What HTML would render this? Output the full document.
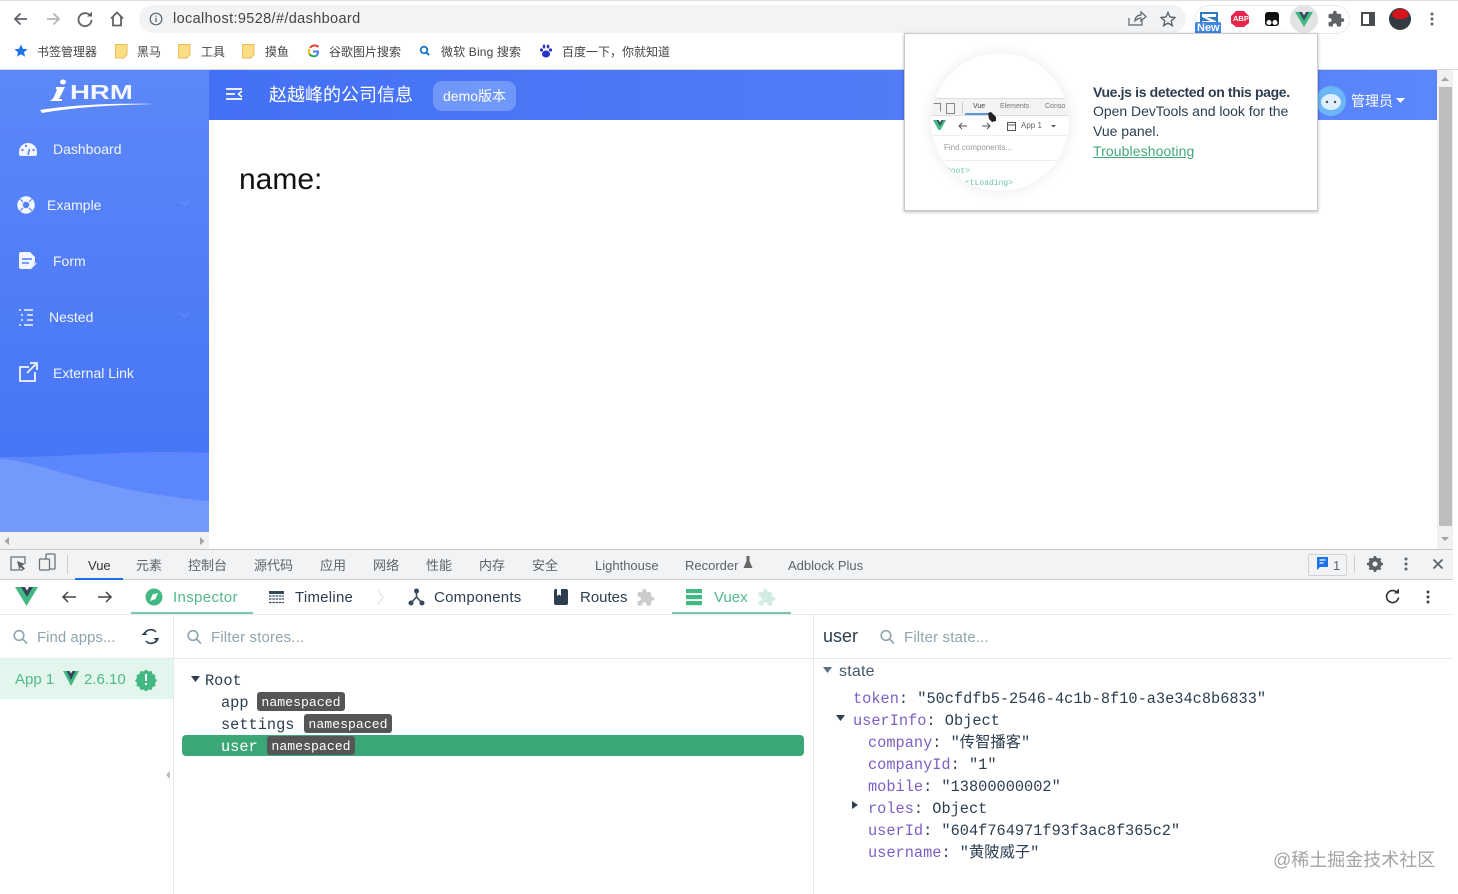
<!DOCTYPE html>
<html><head><meta charset="utf-8"><style>
html,body{margin:0;padding:0;width:1458px;height:894px;overflow:hidden;background:#fff}
body{position:relative;font-family:"Liberation Sans","Noto Sans CJK SC",sans-serif}
.t{position:absolute;white-space:nowrap;line-height:20px;height:20px}
.b{position:absolute}
.m{font-family:"Liberation Mono","Noto Sans CJK SC",monospace;font-size:15.3px;color:#2c3e50}
.k{color:#7d5fc4}
.bm{font-size:12px;color:#444}
.mn{font-size:14px;color:#f2f6ff}
.dt{font-size:13px;color:#5f6368}
.vt{font-size:15px;color:#2c3e50;letter-spacing:.25px}
.ph{font-size:15px;color:#8fa5b0;letter-spacing:-.1px}
.bd{position:absolute;background:#555;color:#fff;border-radius:3px;font-family:"Liberation Mono",monospace;font-size:13.2px;line-height:21px;height:19px;text-align:center;width:88px}
svg.i{position:absolute;overflow:visible}
</style></head><body>

<!-- browser chrome -->
<div class="b" style="left:0;top:0;width:1458px;height:1px;background:#dedfe1"></div>
<div class="b" style="left:139px;top:5px;width:1047px;height:28px;background:#f1f3f4;border-radius:14px"></div>
<div class="b" style="left:1195px;top:5px;width:153px;height:27px;border:1px solid #e8e9eb;border-radius:14px"></div>
<div class="t" style="left:173px;top:9px;font-size:14.5px;color:#444;letter-spacing:.36px">localhost:9528/#/dashboard</div>

<svg class="i" style="left:0;top:0" width="1458" height="70" fill="none">
 <path d="M27 19H15M20.500 13.500L15 19l5.500 5.500" stroke="#5f6368" stroke-width="1.800"/>
 <path d="M47 19h12M53.500 13.500L59 19l-5.500 5.500" stroke="#b3b6ba" stroke-width="1.800"/>
 <path d="M90 15.500A6.500 6.500 0 1 0 91.500 20" stroke="#5f6368" stroke-width="1.800"/>
 <path d="M87 16.500h5v-5z" fill="#5f6368"/>
 <path d="M111 18.500l6-6 6 6M113 17v8.500h8V17" stroke="#5f6368" stroke-width="1.800"/>
 <circle cx="156" cy="19" r="5.800" stroke="#5f6368" stroke-width="1.200"/>
 <path d="M156 18v4M156 15.500v1.200" stroke="#5f6368" stroke-width="1.300"/>
 <path d="M1129 18v7h13v-4M1135 21c0-4 3-6 6-6v-3l5 4.500-5 4.500v-3c-2 0-4 1-6 3z" stroke="#5f6368" stroke-width="1.200"/>
 <path d="M1168 12.500l2 4.500 4.900.5-3.700 3.300 1.100 4.800-4.300-2.500-4.300 2.500 1.100-4.800-3.700-3.300 4.900-.5z" stroke="#5f6368" stroke-width="1.400"/>
 <!-- New ext -->
 <rect x="1200" y="12" width="18" height="12" fill="#2f78c4"/>
 <path d="M1202 14h14v3h-9l9 4v2h-14v-2h8l-8-4z" fill="#fff"/>
 <rect x="1195" y="22" width="26" height="12" rx="2" fill="#3f86e0"/>
 <!-- ABP -->
 <path d="M1236 11h8l5 5v7l-5 4h-8l-5-4v-7z" fill="#e8254a"/>
 <!-- tamper -->
 <rect x="1265" y="12" width="14" height="14" rx="3" fill="#111"/>
 <circle cx="1269" cy="22.500" r="2.500" fill="#fff"/><circle cx="1275" cy="22.500" r="2.500" fill="#fff"/>
 <!-- vue active -->
 <circle cx="1304" cy="19" r="14" fill="#e2e3e5"/>
 <path d="M1295 12h5l4 7 4-7h5l-9 15z" fill="#42b883"/>
 <path d="M1299 12h3l2 3.500 2-3.500h3l-5 8.500z" fill="#35495e"/>
 <!-- puzzle -->
 <path transform="translate(1327 10) scale(.75)" d="M20.500 11H19V7c0-1.100-.9-2-2-2h-4V3.500C13 2.120 11.880 1 10.500 1S8 2.120 8 3.500V5H4c-1.100 0-1.990.9-1.990 2v3.800H3.500c1.490 0 2.700 1.210 2.700 2.700s-1.210 2.700-2.700 2.700H2V20c0 1.100.9 2 2 2h3.800v-1.500c0-1.490 1.210-2.700 2.700-2.700 1.490 0 2.700 1.210 2.700 2.700V22H17c1.100 0 2-.9 2-2v-4h1.500c1.380 0 2.500-1.120 2.500-2.500S21.880 11 20.500 11z" fill="#5f6368"/>
 <!-- panel -->
 <rect x="1362" y="13" width="12" height="12" stroke="#4a4d50" stroke-width="2"/>
 <rect x="1369" y="13" width="5" height="12" fill="#4a4d50"/>
 <!-- avatar -->
 <circle cx="1400" cy="19" r="11" fill="#333a42"/>
 <path d="M1392 15c1-4 5-6 9-6s7 2 8 6c-1 3-5 4-9 4s-7-1-8-4z" fill="#d8131c"/>
 <circle cx="1432" cy="14" r="1.500" fill="#5f6368"/><circle cx="1432" cy="19" r="1.500" fill="#5f6368"/><circle cx="1432" cy="24" r="1.500" fill="#5f6368"/>
 <!-- bookmarks -->
 <path d="M21 44.500l1.900 4.300 4.600.4-3.500 3 1.100 4.600-4.100-2.500-4.100 2.500 1.100-4.600-3.500-3 4.600-.4z" fill="#1a73e8"/>
 <g fill="#fbdd83" stroke="#e9bf58"><path d="M115.500 44.500h11.500v10l-3 3.500h-8.500z"/><path d="M178.500 44.500h11.500v10l-3 3.500h-8.500z"/><path d="M242.500 44.500h11.500v10l-3 3.500h-8.500z"/></g>
 <path d="M310 48a5.500 5.500 0 0 1 8.500-1" stroke="#ea4335" stroke-width="2"/>
 <path d="M309.500 54a5.500 5.500 0 0 1 0-5" stroke="#fbbc05" stroke-width="2"/>
 <path d="M316.500 55.700a5.500 5.500 0 0 1-7-1.700" stroke="#34a853" stroke-width="2"/>
 <path d="M313 51.500h5c0 2-.5 3.300-1.500 4.200" stroke="#4285f4" stroke-width="2"/>
 <circle cx="424" cy="50" r="3.300" stroke="#1976c8" stroke-width="1.800"/><path d="M426.500 52.500l2.500 2.500" stroke="#1976c8" stroke-width="2"/>
 <g fill="#2932c1"><ellipse cx="546" cy="54" rx="4" ry="3.500"/><circle cx="541.500" cy="50" r="1.600"/><circle cx="550.500" cy="50" r="1.600"/><ellipse cx="544" cy="46.500" rx="1.300" ry="2"/><ellipse cx="548" cy="46.500" rx="1.300" ry="2"/></g>
</svg>
<div class="t" style="left:1197px;top:18px;font-size:11px;font-weight:bold;color:#fff">New</div>
<div class="t" style="left:1233px;top:9px;font-size:7.500px;font-weight:bold;color:#fff">ABP</div>

<div class="t bm" style="left:37px;top:42px">书签管理器</div>
<div class="t bm" style="left:137px;top:42px">黑马</div>
<div class="t bm" style="left:201px;top:42px">工具</div>
<div class="t bm" style="left:265px;top:42px">摸鱼</div>
<div class="t bm" style="left:329px;top:42px">谷歌图片搜索</div>
<div class="t bm" style="left:441px;top:42px;letter-spacing:.15px">微软 Bing 搜索</div>
<div class="t bm" style="left:562px;top:42px">百度一下，你就知道</div>
<div class="b" style="left:0;top:69px;width:1458px;height:1px;background:#d5d7da"></div>

<!-- app -->
<div class="b" style="left:0;top:70px;width:209px;height:462px;background:linear-gradient(180deg,#5c88f8 0,#5a85f8 12%,#4272f6 100%)"></div>
<svg class="i" style="left:0;top:452px" width="209" height="80">
 <path d="M0 5C60 6 130-3 209 1V80H0Z" fill="#5c86fb"/>
 <path d="M0 7C40 8 90 38 209 49V80H0Z" fill="#7399fc"/>
</svg>
<div class="b" style="left:209px;top:70px;width:1228px;height:50px;background:linear-gradient(90deg,#4470f5,#5c86fb)"></div>

<!-- logo -->
<svg class="i" style="left:0;top:70px" width="209" height="50">
 <path d="M40 40c30-5 70-7 115-6-40 1-80 3-113 9z" fill="#fff"/>
 <path d="M60 12a3 2.500 0 1 1 6 0 3 2.500 0 0 1-6 0zM56 17h9l-5 10c-.5 1-1 2-2 2h4v2H49c4-1 5-4 7-9l1-3h-1z" fill="#fff"/>
</svg>
<div class="t" style="left:70px;top:83px;font-size:20px;font-weight:bold;color:#f4f7ff;transform:scaleX(1.380);transform-origin:left center;line-height:20px;height:20px">HRM</div>

<!-- menu -->
<svg class="i" style="left:0;top:70px" width="209" height="340" fill="none">
 <path d="M19 82a9 9 0 0 1 18 0v2c0 1-1 2-2 2H21c-1 0-2-1-2-2z" fill="#f2f6ff"/>
 <path d="M28 85l1.500-6" stroke="#4f7cf7" stroke-width="1.500"/><circle cx="22.500" cy="80" r="1.100" fill="#4f7cf7"/><circle cx="33.500" cy="80" r="1.100" fill="#4f7cf7"/><circle cx="26" cy="76" r="1.100" fill="#4f7cf7"/>
 <circle cx="26" cy="135" r="6" stroke="#f2f6ff" stroke-width="5.500"/>
 <path d="M20 129l3 3M32 129l-3 3M20 141l3-3M32 141l-3-3" stroke="#5480f7" stroke-width="1"/>
 <path d="M180 131l4.500 3.500 4.500-3.500" stroke="#6e93f4" stroke-width="1"/>
 <path d="M21 182h9l5 5v5l-5 7H21c-1 0-2-1-2-2v-13c0-1 1-2 2-2z" fill="#f2f6ff"/>
 <path d="M22 189h10M22 193h7" stroke="#4f7cf7" stroke-width="1.500"/>
 <path d="M30 199l6-6" stroke="#f2f6ff" stroke-width="1.500"/>
 <path d="M24 240h9M27 245h6M27 250h6M24 255h9M19 240h2M21 245h2M21 250h2M19 255h2" stroke="#f2f6ff" stroke-width="1.600"/>
 <path d="M180 243l4.500 3.500 4.500-3.500" stroke="#6e93f4" stroke-width="1"/>
 <path d="M29 297H20v14h15v-9" stroke="#f2f6ff" stroke-width="1.800"/>
 <path d="M27 303l9-9M30 293h7v7" stroke="#f2f6ff" stroke-width="1.800"/>
</svg>
<div class="t mn" style="left:53px;top:139px">Dashboard</div>
<div class="t mn" style="left:47px;top:195px">Example</div>
<div class="t mn" style="left:53px;top:251px">Form</div>
<div class="t mn" style="left:49px;top:307px">Nested</div>
<div class="t mn" style="left:53px;top:363px">External Link</div>

<!-- horizontal scrollbar -->
<div class="b" style="left:0;top:532px;width:209px;height:17px;background:#f1f1f1"></div>
<svg class="i" style="left:0;top:532px" width="209" height="17"><path d="M9 5v8L4.500 9zM200 5v8l4.500-4z" fill="#a3a3a3"/></svg>

<!-- header -->
<svg class="i" style="left:0;top:70px" width="300" height="50" fill="none">
 <path d="M226 19h16M226 24h9M226 29h16" stroke="#fff" stroke-width="1.800"/><path d="M242 21l-3.500 3 3.500 3" stroke="#fff" stroke-width="1.500"/>
</svg>
<div class="t" style="left:269px;top:85px;font-size:18px;color:#fff">赵越峰的公司信息</div>
<div class="b" style="left:433px;top:81px;width:83px;height:30px;background:#7097fa;border-radius:9px"></div>
<div class="t" style="left:443px;top:86px;font-size:14px;color:#fff">demo版本</div>
<svg class="i" style="left:1300px;top:70px" width="120" height="50">
 <circle cx="31" cy="31" r="15" fill="#6cb6f7"/>
 <ellipse cx="31" cy="32" rx="10" ry="8" fill="#dff0fd"/>
 <circle cx="27" cy="32" r="1.200" fill="#446"/><circle cx="35" cy="32" r="1.200" fill="#446"/>
 <path d="M96 28h9l-4.500 5z" fill="#fff"/>
</svg>
<div class="t" style="left:1351px;top:91px;font-size:14px;color:#fff">管理员</div>

<div class="t" style="left:239px;top:160px;font-size:30px;line-height:40px;height:40px;color:#111">name:</div>

<!-- right scrollbar -->
<div class="b" style="left:1437px;top:70px;width:16px;height:479px;background:#f1f1f1"></div>
<div class="b" style="left:1439px;top:87px;width:13px;height:439px;background:#bdbdbd"></div>
<svg class="i" style="left:1437px;top:70px" width="16" height="479"><path d="M4 11h8l-4-4zM4 467h8l-4 4z" fill="#a3a3a3"/></svg>

<!-- popup -->
<div class="b" style="left:904px;top:33px;width:412px;height:176px;background:#fff;border:1px solid #c9c9c9;box-shadow:0 1px 3px rgba(0,0,0,.3);overflow:hidden">
 <div class="b" style="left:26px;top:19px;width:138px;height:138px;border-radius:50%;box-shadow:0 0 14px rgba(0,0,0,.09);background:#fff;overflow:hidden">
  <div class="b" style="left:0;top:45px;width:138px;height:16px;background:#f3f3f4;border-top:1px solid #ddd;border-bottom:1px solid #ddd"></div>
  <div class="b" style="left:34px;top:60px;width:23px;height:2px;background:#5a95dd"></div>
  <div class="t" style="left:42px;top:44px;font-size:7px;color:#444">Vue</div>
  <div class="t" style="left:69px;top:44px;font-size:7px;color:#777">Elements</div>
  <div class="t" style="left:114px;top:44px;font-size:7px;color:#777">Conso</div>
  <div class="t" style="left:90px;top:63px;font-size:8px;color:#666">App 1</div>
  <div class="t" style="left:13px;top:85px;font-size:8px;color:#999">Find components...</div>
  <div class="t" style="left:15px;top:109px;font-size:8px;color:#6cc7a0;font-family:'Liberation Mono',monospace">Root&gt;</div>
  <div class="t" style="left:34px;top:121px;font-size:8px;color:#6cc7a0;font-family:'Liberation Mono',monospace">rtLoading&gt;</div>
  <div class="b" style="left:0;top:82px;width:138px;height:1px;background:#eee"></div>
  <div class="b" style="left:0;top:107px;width:138px;height:1px;background:#eee"></div>
  <svg class="i" style="left:0;top:0" width="138" height="138" fill="none">
   <path d="M2 67h5l2.500 4 2.500-4h3l-5.500 10h-2z" fill="#42b883"/>
   <path d="M5.500 67h2l1.500 2.500L10.500 67h2L9 73z" fill="#35495e"/>
   <path d="M28 73h8M31 70l-3 3 3 3M51 73h8M56 70l3 3-3 3" stroke="#555"/>
   <rect x="76.500" y="69.500" width="8" height="8" stroke="#555"/><path d="M77 72h7" stroke="#555"/>
   <path d="M120 72h5l-2.500 2.500z" fill="#555"/>
   <rect x="15.500" y="50.500" width="8" height="10" stroke="#888"/>
   <path d="M2.500 50.500h7v8" stroke="#888"/>
   <path d="M31.500 49v12" stroke="#ccc"/>
   <path d="M57 60l3-1 5 5v4l-4 1-3-3z" fill="#222"/>
  </svg>
 </div>
 <div class="t" style="left:188px;top:48px;font-size:14px;font-weight:bold;color:#2c3e50;letter-spacing:-.35px">Vue.js is detected on this page.</div>
 <div class="t" style="left:188px;top:67px;font-size:14px;color:#2c3e50;letter-spacing:-.03px">Open DevTools and look for the</div>
 <div class="t" style="left:188px;top:87px;font-size:14px;color:#2c3e50">Vue panel.</div>
 <div class="t" style="left:188px;top:107px;font-size:14px;color:#42a878;text-decoration:underline;letter-spacing:.1px">Troubleshooting</div>
</div>

<!-- devtools tabs -->
<div class="b" style="left:0;top:549px;width:1453px;height:1px;background:#c4c6c8"></div>
<div class="b" style="left:0;top:550px;width:1453px;height:29px;background:#f1f3f4;border-bottom:1px solid #c9cbcd"></div>
<div class="b" style="left:75px;top:578px;width:48px;height:2px;background:#1a73e8"></div>
<div class="t dt" style="left:88px;top:556px;color:#333">Vue</div>
<div class="t dt" style="left:136px;top:556px">元素</div>
<div class="t dt" style="left:188px;top:556px">控制台</div>
<div class="t dt" style="left:254px;top:556px">源代码</div>
<div class="t dt" style="left:320px;top:556px">应用</div>
<div class="t dt" style="left:373px;top:556px">网络</div>
<div class="t dt" style="left:426px;top:556px">性能</div>
<div class="t dt" style="left:479px;top:556px">内存</div>
<div class="t dt" style="left:532px;top:556px">安全</div>
<div class="t dt" style="left:595px;top:556px">Lighthouse</div>
<div class="t dt" style="left:685px;top:556px">Recorder</div>
<div class="t dt" style="left:788px;top:556px">Adblock Plus</div>
<div class="b" style="left:1308px;top:554px;width:37px;height:20px;border:1px solid #cfd1d3;border-radius:2px"></div>
<div class="t dt" style="left:1333px;top:556px">1</div>
<svg class="i" style="left:0;top:550px" width="1458" height="30" fill="none">
 <path d="M23 20h-12V7h14v7" stroke="#6e7276" stroke-width="1.300"/><path d="M17 11l8 3-3 1.500 3 3-1.500 1.500-3-3-1 3z" fill="#5f6368"/>
 <rect x="46" y="4" width="9" height="15" rx="1" stroke="#6e7276" stroke-width="1.300"/><rect x="39.500" y="9" width="10" height="11" rx="1" fill="#f1f3f4" stroke="#6e7276" stroke-width="1.300"/>
 <path d="M67.500 5v19" stroke="#ccc"/>
 <path d="M745 6h5M746.500 6v5l-3 7h9l-3-7V6z" fill="#666"/>
 <path d="M1317 7h11v10h-8l-3 3z" fill="#1a73e8"/><path d="M1319.500 10h6M1319.500 13h4" stroke="#fff" stroke-width="1.200"/>
 <path d="M1354.500 5v18" stroke="#ccc"/>
 <circle cx="1375" cy="14" r="4.500" stroke="#5f6368" stroke-width="4"/>
 <path d="M1375 6v3M1375 19v3M1367 14h3M1380 14h3M1369.500 8.500l2 2M1378.500 17.500l2 2M1380.500 8.500l-2 2M1371.500 17.500l-2 2" stroke="#5f6368" stroke-width="2.500"/>
 <circle cx="1406" cy="9" r="1.500" fill="#5f6368"/><circle cx="1406" cy="14" r="1.500" fill="#5f6368"/><circle cx="1406" cy="19" r="1.500" fill="#5f6368"/>
 <path d="M1433.500 9.500l9 9M1442.500 9.500l-9 9" stroke="#5f6368" stroke-width="1.800"/>
</svg>

<!-- vue devtools toolbar -->
<div class="b" style="left:0;top:614px;width:1453px;height:1px;background:#e6e7e8"></div>
<div class="b" style="left:131px;top:612px;width:122px;height:2px;background:#7cc7a6"></div>
<div class="b" style="left:672px;top:612px;width:119px;height:2px;background:#7cc7a6"></div>
<div class="t vt" style="left:173px;top:588px;color:#52b88b;letter-spacing:.35px">Inspector</div>
<div class="t vt" style="left:295px;top:588px">Timeline</div>
<div class="t vt" style="left:434px;top:588px">Components</div>
<div class="t vt" style="left:580px;top:588px;letter-spacing:0">Routes</div>
<div class="t vt" style="left:714px;top:588px;color:#52b88b;letter-spacing:0">Vuex</div>
<svg class="i" style="left:0;top:580px" width="1458" height="34" fill="none">
 <path d="M15 7h8l4 6.500L31 7h7L26.500 26z" fill="#42b883"/><path d="M21 7h4l2 3.500L29 7h4l-6 10z" fill="#35495e"/>
 <path d="M76 17H63M68 12l-5 5 5 5M98 17h13M106 12l5 5-5 5" stroke="#444" stroke-width="1.500"/>
 <circle cx="154" cy="17" r="8.500" fill="#42b883"/><path d="M150 21l2.500-6.500L158 13l-2.500 6z" fill="#fff"/>
 <rect x="269" y="11" width="15" height="3" fill="#35495e"/>
 <path d="M269 16h15M269 19h15M269 22.500h15" stroke="#35495e" stroke-width="1.300" stroke-dasharray="2.500 .8"/>
 <path d="M378 10l5 7-5 7" stroke="#ddd" stroke-width="1"/>
 <circle cx="416.500" cy="11" r="2.500" fill="#35495e"/><circle cx="411" cy="23" r="2.500" fill="#35495e"/><circle cx="422" cy="23" r="2.500" fill="#35495e"/><path d="M416.500 11v6l-5.500 6M416.500 17l5.500 6" stroke="#35495e" stroke-width="1.600"/>
 <rect x="554" y="9" width="14" height="16" rx="2" fill="#2c3e50"/><path d="M557 9v7l2-1.500 2 1.500V9z" fill="#fff"/>
 <path transform="translate(636 8) scale(.8)" d="M20.500 11H19V7c0-1.100-.9-2-2-2h-4V3.500C13 2.120 11.880 1 10.500 1S8 2.120 8 3.500V5H4c-1.100 0-1.990.9-1.990 2v3.800H3.500c1.490 0 2.700 1.210 2.700 2.700s-1.210 2.700-2.700 2.700H2V20c0 1.100.9 2 2 2h3.800v-1.500c0-1.490 1.210-2.700 2.700-2.700 1.490 0 2.700 1.210 2.700 2.700V22H17c1.100 0 2-.9 2-2v-4h1.500c1.380 0 2.500-1.120 2.500-2.500S21.880 11 20.500 11z" fill="#ccc"/>
 <g fill="#42b883"><rect x="686" y="9" width="16" height="4.200"/><rect x="686" y="15" width="16" height="4.200"/><rect x="686" y="21" width="16" height="4.200"/></g>
 <path transform="translate(757 8) scale(.8)" d="M20.500 11H19V7c0-1.100-.9-2-2-2h-4V3.500C13 2.120 11.880 1 10.500 1S8 2.120 8 3.500V5H4c-1.100 0-1.990.9-1.990 2v3.800H3.500c1.490 0 2.700 1.210 2.700 2.700s-1.210 2.700-2.700 2.700H2V20c0 1.100.9 2 2 2h3.800v-1.500c0-1.490 1.210-2.700 2.700-2.700 1.490 0 2.700 1.210 2.700 2.700V22H17c1.100 0 2-.9 2-2v-4h1.500c1.380 0 2.500-1.120 2.500-2.500S21.880 11 20.500 11z" fill="#d3ece1"/>
 <path d="M1397 12.500a6 6 0 1 0 1.500 5" stroke="#333" stroke-width="1.600"/><path d="M1394 13.500h5v-5z" fill="#333"/>
 <circle cx="1428" cy="12" r="1.500" fill="#444"/><circle cx="1428" cy="17" r="1.500" fill="#444"/><circle cx="1428" cy="22" r="1.500" fill="#444"/>
</svg>

<!-- panes -->
<div class="b" style="left:173px;top:615px;width:1px;height:279px;background:#e6e7e8"></div>
<div class="b" style="left:813px;top:615px;width:1px;height:279px;background:#e6e7e8"></div>
<div class="b" style="left:0;top:658px;width:1453px;height:1px;background:#e6e7e8"></div>
<div class="b" style="left:0;top:659px;width:173px;height:40px;background:#e3f6ee"></div>
<div class="t ph" style="left:37px;top:627.500px;letter-spacing:0">Find apps...</div>
<div class="t ph" style="left:211px;top:627.500px;letter-spacing:.15px">Filter stores...</div>
<div class="t" style="left:823px;top:626px;font-size:18px;color:#2c3e50">user</div>
<div class="t ph" style="left:904px;top:627.500px;letter-spacing:.15px">Filter state...</div>
<svg class="i" style="left:0;top:615px" width="1458" height="90" fill="none">
 <g stroke="#8fa5b0" stroke-width="1.600"><circle cx="19" cy="20.500" r="4.800"/><path d="M22.500 24l4.500 4.500"/><circle cx="193" cy="20.500" r="4.800"/><path d="M196.500 24l4.500 4.500"/><circle cx="886" cy="20.500" r="4.800"/><path d="M889.500 24l4.500 4.500"/></g>
 <path d="M144 20a7 7 0 0 1 12-3M158 23a7 7 0 0 1-12 3" stroke="#2c3e50" stroke-width="1.600"/>
 <path d="M143 20h-1.500l3-3 3 3zM158 23h1.500l-3 3-3-3z" fill="#2c3e50"/>
 <path d="M63 56h5l3 5 3-5h5l-8 15z" fill="#42b883"/><path d="M66.500 56h3l1.500 2.500 1.500-2.500h3l-4.500 9z" fill="#35495e"/>
 <path d="M146 54.500l2.500 2 3-.5 1 3 3 1-.5 3 2 2.500-2 2.500.5 3-3 1-1 3-3-.5-2.500 2-2.500-2-3 .5-1-3-3-1 .5-3-2-2.500 2-2.500-.5-3 3-1 1-3 3 .5z" fill="#42b883"/>
 <path d="M146 59v7M146 68v2" stroke="#fff" stroke-width="2"/>
 <path d="M191 61h9l-4.500 6z" fill="#2c3e50"/>
 <path d="M823 52h9l-4.500 6z" fill="#5c7080"/>
</svg>
<div class="t" style="left:15px;top:670px;font-size:15px;color:#52b88b">App 1</div>
<div class="t" style="left:84px;top:670px;font-size:15px;color:#52b88b">2.6.10</div>
<svg class="i" style="left:164px;top:770px" width="8" height="10"><path d="M6 1v8L2 5z" fill="#bbb"/></svg>

<!-- store tree -->
<div class="b" style="left:182px;top:735px;width:622px;height:21px;background:#3ba776;border-radius:4px"></div>
<div class="t m" style="left:205px;top:671px">Root</div>
<div class="t m" style="left:221px;top:693px">app</div>
<div class="t m" style="left:221px;top:715px">settings</div>
<div class="t m" style="left:221px;top:737px;color:#fff">user</div>
<div class="bd" style="left:257px;top:692px">namespaced</div>
<div class="bd" style="left:304px;top:714px">namespaced</div>
<div class="bd" style="left:267px;top:736px">namespaced</div>

<!-- state -->
<div class="t" style="left:839px;top:662px;font-size:16px;color:#44586a;letter-spacing:.2px">state</div>
<div class="t m" style="left:853px;top:689px"><span class="k">token</span>: "50cfdfb5-2546-4c1b-8f10-a3e34c8b6833"</div>
<div class="t m" style="left:853px;top:711px"><span class="k">userInfo</span>: Object</div>
<div class="t m" style="left:868px;top:733px"><span class="k">company</span>: "传智播客"</div>
<div class="t m" style="left:868px;top:755px"><span class="k">companyId</span>: "1"</div>
<div class="t m" style="left:868px;top:777px"><span class="k">mobile</span>: "13800000002"</div>
<div class="t m" style="left:868px;top:799px"><span class="k">roles</span>: Object</div>
<div class="t m" style="left:868px;top:821px"><span class="k">userId</span>: "604f764971f93f3ac8f365c2"</div>
<div class="t m" style="left:868px;top:843px"><span class="k">username</span>: "黄陂威子"</div>
<svg class="i" style="left:830px;top:710px" width="40" height="110"><path d="M6 5h9l-4.500 6z" fill="#2c3e50"/><path d="M22 91v8l6-4z" fill="#2c3e50"/></svg>

<div class="t" style="left:1273px;top:850px;font-size:18px;color:#a4a4a4">@稀土掘金技术社区</div>
</body></html>
